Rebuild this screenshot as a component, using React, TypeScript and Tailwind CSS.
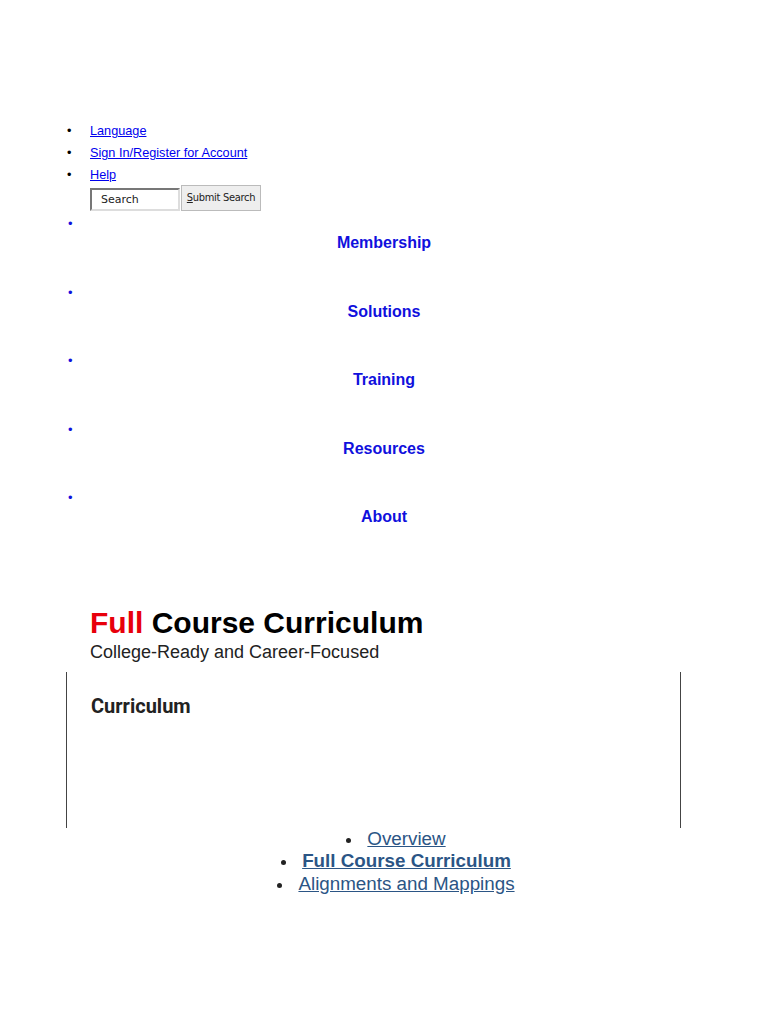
const navItems = ['Membership', 'Solutions', 'Training', 'Resources', 'About'];

function Bullet({ className = '' }: { className?: string }) {
  return <span className={`w-[23px] shrink-0 ${className}`}>•</span>;
}

export default function App() {
  return (
    <div className="min-h-[1024px] bg-white font-['Liberation_Sans',Arial,sans-serif] text-black overflow-hidden">
      {/* Utility links */}
      <ul className="pl-[67px] pt-[120px] text-[12.7px] leading-[22px]">
        <li className="flex">
          <Bullet />
          <a href="#" className="text-[#0000ee] underline">Language</a>
        </li>
        <li className="flex">
          <Bullet />
          <a href="#" className="text-[#0000ee] underline">Sign In/Register for Account</a>
        </li>
        <li className="flex">
          <Bullet />
          <div>
            <a href="#" className="text-[#0000ee] underline">Help</a>
            <div className="flex items-end -mt-[1px]">
              <input
                defaultValue="Search"
                className="w-[90px] h-[23px] border-2 border-t-[#777] border-l-[#777] border-r-[#ddd] border-b-[#ddd] px-[9px] text-[11px] font-['DejaVu_Sans',sans-serif] text-[#222] outline-none"
              />
              <button className="ml-[1px] w-[80px] h-[26px] bg-[#eee] border border-[#bbb] whitespace-nowrap text-[11px] tracking-[-0.3px] font-['DejaVu_Sans_Condensed','DejaVu_Sans',sans-serif] text-[#222]">
                <span className="underline">S</span>ubmit Search
              </button>
            </div>
          </div>
        </li>
      </ul>

      {/* Main nav */}
      <ul className="pl-[68px] text-[#1010dd] mt-[4px]">
        {navItems.map((item) => (
          <li key={item} className="h-[68.5px] flex text-[13px] leading-[18px]">
            <Bullet />
            <div className="flex-1">
              <div>&nbsp;</div>
              <div className="-ml-[91px] w-[768px] text-center text-[16px] font-bold leading-[20px]">
                <a href="#">{item}</a>
              </div>
            </div>
          </li>
        ))}
      </ul>

      {/* Heading */}
      <div className="pl-[90px] mt-[47px]">
        <h1 className="text-[30px] font-bold leading-[36px]">
          <span className="text-[#e8000b]">Full</span> Course Curriculum
        </h1>
        <p className="text-[18px] leading-[22px] text-[#222]">College-Ready and Career-Focused</p>
      </div>

      {/* Curriculum box */}
      <div className="ml-[66px] w-[615px] h-[156px] mt-[9px] border-l border-r border-[#444] pl-[24px] pt-[22px]">
        <h2 className="text-[20px] font-bold font-['Roboto',sans-serif] text-[#222] leading-[24px]">Curriculum</h2>
      </div>

      {/* Sub nav */}
      <ul className="list-disc list-inside pl-[24px] text-center text-[18.8px] text-[#222] marker:text-[15px]">
        <li className="h-[22.5px] leading-[22.5px]">
          <a href="#" className="underline text-[#2b5585]">Overview</a>
        </li>
        <li className="h-[22.5px] leading-[22.5px]">
          <a href="#" className="underline font-bold text-[#2b5585]">Full Course Curriculum</a>
        </li>
        <li className="h-[22.5px] leading-[22.5px]">
          <a href="#" className="underline text-[#2b5585]">Alignments and Mappings</a>
        </li>
      </ul>
    </div>
  );
}
